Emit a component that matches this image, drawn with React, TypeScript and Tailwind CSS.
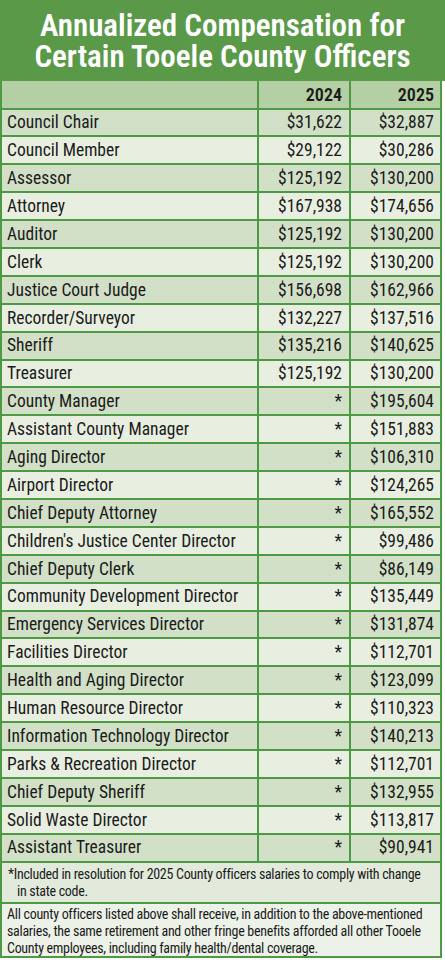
const rows: [string, string, string][] = [
  ["Council Chair", "$31,622", "$32,887"],
  ["Council Member", "$29,122", "$30,286"],
  ["Assessor", "$125,192", "$130,200"],
  ["Attorney", "$167,938", "$174,656"],
  ["Auditor", "$125,192", "$130,200"],
  ["Clerk", "$125,192", "$130,200"],
  ["Justice Court Judge", "$156,698", "$162,966"],
  ["Recorder/Surveyor", "$132,227", "$137,516"],
  ["Sheriff", "$135,216", "$140,625"],
  ["Treasurer", "$125,192", "$130,200"],
  ["County Manager", "*", "$195,604"],
  ["Assistant County Manager", "*", "$151,883"],
  ["Aging Director", "*", "$106,310"],
  ["Airport Director", "*", "$124,265"],
  ["Chief Deputy Attorney", "*", "$165,552"],
  ["Children's Justice Center Director", "*", "$99,486"],
  ["Chief Deputy Clerk", "*", "$86,149"],
  ["Community Development Director", "*", "$135,449"],
  ["Emergency Services Director", "*", "$131,874"],
  ["Facilities Director", "*", "$112,701"],
  ["Health and Aging Director", "*", "$123,099"],
  ["Human Resource Director", "*", "$110,323"],
  ["Information Technology Director", "*", "$140,213"],
  ["Parks & Recreation Director", "*", "$112,701"],
  ["Chief Deputy Sheriff", "*", "$132,955"],
  ["Solid Waste Director", "*", "$113,817"],
  ["Assistant Treasurer", "*", "$90,941"],
];

const font = { fontFamily: '"Roboto Condensed", "Liberation Sans", sans-serif' };

export default function App() {
  return (
    <div className="w-[445px] h-[960px] bg-white text-[#1b1b1b]" style={font}>
      <div className="h-[81px] bg-[#5a9948] pt-[10px] text-center text-white text-[31px] leading-[31px] font-semibold">
        <div className="whitespace-nowrap">Annualized Compensation for</div>
        <div className="whitespace-nowrap">Certain Tooele County Officers</div>
      </div>
      <div className="w-[442px] border-l-2 border-r-2 border-[#4e9a44]">
        <div className="flex h-[28.5px] bg-[#b4cfa4] border-b-2 border-[#4e9a44] text-[18px] font-semibold">
          <div className="w-[257px] border-r-2 border-[#4e9a44]" />
          <div className="w-[92px] border-r-2 border-[#4e9a44] flex items-center justify-end pr-[7px]">2024</div>
          <div className="w-[87px] flex items-center justify-end pr-[4px]">2025</div>
        </div>
        {rows.map(([name, a, b], i) => (
          <div
            key={name}
            className={`flex h-[27.9px] border-b-2 border-[#4e9a44] text-[17.5px] ${
              i % 2 === 0 ? "bg-[#d2e0c7]" : "bg-[#e8efe1]"
            }`}
          >
            <div className="w-[257px] border-r-2 border-[#4e9a44] flex items-center pl-[5px] whitespace-nowrap">
              {name}
            </div>
            <div className="w-[92px] border-r-2 border-[#4e9a44] flex items-center justify-end pr-[7px]">
              {a}
            </div>
            <div className="w-[87px] flex items-center justify-end pr-[4px]">{b}</div>
          </div>
        ))}
        <div className="h-[41px] bg-[#e2eadb] border-b-2 border-[#4e9a44] pt-[3px] text-[14px] leading-[17px] tracking-[-0.3px]">
          <div className="pl-[6px] whitespace-nowrap">*Included in resolution for 2025 County officers salaries to comply with change</div>
          <div className="pl-[15px] whitespace-nowrap">in state code.</div>
        </div>
        <div className="h-[54px] bg-[#edf2e8] border-b-2 border-[#4e9a44] pt-[2px] pl-[5px] text-[14px] leading-[17px] tracking-[-0.3px]">
          <div className="whitespace-nowrap">All county officers listed above shall receive, in addition to the above-mentioned</div>
          <div className="whitespace-nowrap">salaries, the same retirement and other fringe benefits afforded all other Tooele</div>
          <div className="whitespace-nowrap">County employees, including family health/dental coverage.</div>
        </div>
      </div>
    </div>
  );
}
